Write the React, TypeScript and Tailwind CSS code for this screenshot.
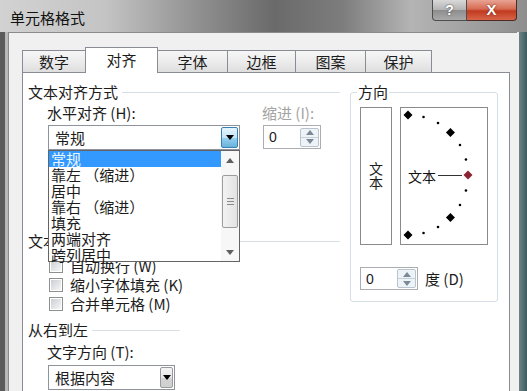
const tabs = [
  { label: "数字", w: "w-[63px]" },
  { label: "对齐", w: "w-[73px]" },
  { label: "字体", w: "w-[69px]" },
  { label: "边框", w: "w-[68px]" },
  { label: "图案", w: "w-[70px]" },
  { label: "保护", w: "w-[67px]" },
];

const listItems = ["常规", "靠左 （缩进）", "居中", "靠右 （缩进）", "填充", "两端对齐", "跨列居中"];

function DownTri({ color = "#000" }: { color?: string }) {
  return (
    <svg width="8" height="5" viewBox="0 0 8 5">
      <path d="M0 0 H8 L4 5 Z" fill={color} />
    </svg>
  );
}

function UpTri({ color = "#000" }: { color?: string }) {
  return (
    <svg width="8" height="5" viewBox="0 0 8 5">
      <path d="M0 5 H8 L4 0 Z" fill={color} />
    </svg>
  );
}

function Select({ value, width, hot }: { value: string; width: string; hot?: boolean }) {
  return (
    <div className={`flex h-[25px] ${width} items-stretch border border-[#8f939b] bg-white`}>
      <span className="flex-1 pl-[6px] text-[15px] leading-[23px]">{value}</span>
      <div
        className={
          hot
            ? "m-[1px] flex w-[17px] items-center justify-center rounded-[2px] border border-[#3c7fb1] bg-[linear-gradient(180deg,#e5f4fc_0%,#c4e5f6_50%,#98d1ef_51%,#68b3db_100%)]"
            : "m-[1px] flex w-[13px] items-center justify-center rounded-[2px] border border-[#9a9a9a] bg-[linear-gradient(180deg,#f4f4f4_0%,#e6e6e6_50%,#d4d4d4_51%,#cfcfcf_100%)]"
        }
      >
        <DownTri />
      </div>
    </div>
  );
}

function Spin({ value, height }: { value: string; height: string }) {
  return (
    <div className={`flex ${height} w-[58px] items-center border border-[#abadb3] bg-white`}>
      <span className="flex-1 pl-[5px] font-['Liberation_Sans',sans-serif] text-[14px] leading-none">{value}</span>
      <div className="mr-[1px] flex h-[19px] w-[19px] flex-col rounded-[2px] border border-[#b9c4d0] bg-[#eef3f8]">
        <div className="flex flex-1 items-center justify-center border-b border-[#c6d0da]">
          <UpTri color="#7d8896" />
        </div>
        <div className="flex flex-1 items-center justify-center">
          <DownTri color="#7d8896" />
        </div>
      </div>
    </div>
  );
}

function Checkbox({ label }: { label: string }) {
  return (
    <div className="ml-[21px] flex h-[19px] items-center gap-[7px]">
      <div className="flex h-[14px] w-[14px] items-center justify-center border border-[#8e8f8f] bg-white">
        <div className="h-[10px] w-[10px] bg-[linear-gradient(135deg,#cbcfd5,#f6f6f6)]" />
      </div>
      <span className="text-[15px] leading-[19px]">{label}</span>
    </div>
  );
}

function GroupHeader({ label, width }: { label: string; width: string }) {
  return (
    <div className={`flex h-[18px] ${width} items-center`}>
      <span className="pr-[4px] text-[15px] leading-[18px]">{label}</span>
      <div className="h-px flex-1 bg-[#d5dfe5]" />
    </div>
  );
}

function Dial() {
  const cx = 7;
  const cy = 67;
  const r = 60;
  const pts = [];
  for (let i = 0; i <= 12; i++) {
    const a = ((90 - i * 15) * Math.PI) / 180;
    pts.push({ x: cx + r * Math.cos(a), y: cy - r * Math.sin(a), big: i % 3 === 0, red: i === 6 });
  }
  return (
    <svg width="86" height="136" viewBox="0 0 86 136">
      {pts.map((p, i) =>
        p.big ? (
          <path
            key={i}
            d={`M${p.x} ${p.y - 4.5} L${p.x + 4.5} ${p.y} L${p.x} ${p.y + 4.5} L${p.x - 4.5} ${p.y} Z`}
            fill={p.red ? "#8a2433" : "#000"}
          />
        ) : (
          <circle key={i} cx={p.x} cy={p.y} r="1.3" fill="#000" />
        )
      )}
      <text x="7" y="74" fontSize="14" fontFamily="'Noto Sans CJK SC', sans-serif" fill="#111">
        文本
      </text>
      <line x1="37" y1="67.5" x2="61" y2="67.5" stroke="#333" strokeWidth="1" />
    </svg>
  );
}

export default function App() {
  return (
    <div className="flex h-[391px] w-[527px] flex-col overflow-hidden font-['Noto_Sans_CJK_SC','Noto_Sans',sans-serif] text-[#1c1c1c]">
      {/* title bar */}
      <div className="flex h-[32px] shrink-0 items-start bg-[linear-gradient(90deg,#d2d2d2_0%,#c4c4c4_20%,#8f8f8f_38%,#6a6a6a_52%,#7d7d7d_65%,#b4b4b4_78%,#8e8e8e_100%)]">
        <span className="pl-[10px] pt-[8px] text-[15px] leading-[20px] text-[#111]">单元格格式</span>
        <div className="ml-auto mr-[10px] flex h-[21px]">
          <div className="flex w-[35px] items-center justify-center rounded-bl-[4px] border border-t-0 border-[#4d4d4d] bg-[linear-gradient(180deg,#d9d9d9_0%,#b3b3b3_50%,#8d8d8d_51%,#a9a9a9_100%)] font-['Liberation_Sans',sans-serif] text-[14px] font-bold text-white [text-shadow:0_0_2px_#333]">
            ?
          </div>
          <div className="flex w-[50px] items-center justify-center rounded-br-[4px] border border-l-0 border-t-0 border-[#4d2a24] bg-[linear-gradient(180deg,#e8a494_0%,#d66a52_45%,#c13a20_55%,#d86548_100%)] font-['Liberation_Sans',sans-serif] text-[15px] font-bold text-white [text-shadow:0_0_2px_#5a1a10]">
            X
          </div>
        </div>
      </div>

      <div className="flex flex-1">
        {/* left frame */}
        <div className="w-[5px] bg-[#5b5b5b]" />
        <div className="w-[3px] bg-[#b9b9b9]" />

        {/* client area */}
        <div className="flex flex-1 flex-col border-l border-t border-[#8a8a8a] bg-[#f0f0f0] pl-[13px] pr-[7px] pt-[14px]">
          {/* tabs */}
          <div className="flex h-[25px] items-end">
            {tabs.map((t, i) => {
              const active = i === 1;
              const afterActive = i === 2;
              return (
                <div
                  key={t.label}
                  className={
                    active
                      ? `relative z-10 -mb-px flex h-[26px] ${t.w} items-start justify-center border-x border-t border-[#898c95] bg-white pt-[2px] text-[15px] leading-[20px]`
                      : `flex h-[22px] ${t.w} items-center justify-center border-t border-[#898c95] ${afterActive ? "" : "border-l"} ${i === tabs.length - 1 ? "border-r" : ""} bg-[linear-gradient(180deg,#f6f6f6_0%,#ececec_50%,#dedede_100%)] text-[15px] leading-[20px]`
                  }
                >
                  {t.label}
                </div>
              );
            })}
          </div>

          {/* tab panel */}
          <div className="relative flex flex-1 border border-b-0 border-[#898c95] bg-white">
            {/* left column */}
            <div className="flex w-[317px] flex-col pl-[5px]">
              <div className="mt-[10px]">
                <GroupHeader label="文本对齐方式" width="w-[312px]" />
              </div>
              <div className="mt-[3px] flex">
                <div className="ml-[19px] flex flex-col gap-[3px]">
                  <span className="h-[18px] text-[15px] leading-[18px]">水平对齐 (H):</span>
                  <div className="ml-px">
                    <Select value="常规" width="w-[192px]" hot />
                  </div>
                </div>
                <div className="ml-[22px] flex flex-col gap-[3px]">
                  <span className="h-[18px] text-[15px] leading-[18px] text-[#a3a3a3]">缩进 (I):</span>
                  <div className="ml-px">
                    <Spin value="0" height="h-[24px]" />
                  </div>
                </div>
              </div>

              <div className="mt-[82px]">
                <GroupHeader label="文本控制" width="w-[312px]" />
              </div>
              <div className="mt-[6px] flex flex-col">
                <Checkbox label="自动换行 (W)" />
                <Checkbox label="缩小字体填充 (K)" />
                <Checkbox label="合并单元格 (M)" />
              </div>

              <div className="mt-[8px]">
                <GroupHeader label="从右到左" width="w-[152px]" />
              </div>
              <span className="ml-[19px] mt-[4px] h-[18px] text-[15px] leading-[18px]">文字方向 (T):</span>
              <div className="ml-[20px] mt-[4px]">
                <Select value="根据内容" width="w-[127px]" />
              </div>
            </div>

            {/* orientation group */}
            <div className="ml-[10px] mt-[19px] h-[210px] w-[148px] rounded-[3px] border border-[#d5dfe5]">
              <div className="-mt-[10px] ml-[6px] w-fit bg-white px-px text-[15px] leading-[18px]">方向</div>
              <div className="ml-[9px] mt-[6px] flex gap-[8px]">
                <div className="flex h-[138px] w-[32px] items-center justify-center border border-[#8a8a8a]">
                  <span className="text-[14px] leading-[16px] [writing-mode:vertical-rl]">文本</span>
                </div>
                <div className="h-[138px] w-[88px] border border-[#8a8a8a]">
                  <Dial />
                </div>
              </div>
              <div className="ml-[9px] mt-[22px] flex items-center gap-[7px]">
                <Spin value="0" height="h-[23px]" />
                <span className="text-[15px] leading-[18px]">度 (D)</span>
              </div>
            </div>

            {/* open dropdown list */}
            <div className="absolute left-[25px] top-[77px] z-20 flex h-[112px] w-[192px] border border-[#646464] bg-white">
              <div className="flex flex-1 flex-col">
                {listItems.map((item, i) => (
                  <div
                    key={item}
                    className={`h-[16px] whitespace-nowrap pl-[2px] text-[15px] leading-[16px] ${i === 0 ? "bg-[#3399ff] text-[#eaf6ff]" : ""}`}
                  >
                    {item}
                  </div>
                ))}
              </div>
              <div className="flex w-[18px] flex-col items-center bg-[#f7f7f7] py-[1px]">
                <div className="flex h-[16px] w-full items-center justify-center">
                  <UpTri color="#5f5f5f" />
                </div>
                <div className="mt-[7px] flex h-[53px] w-[16px] flex-col items-center justify-center gap-[2px] rounded-[2px] border border-[#9c9c9c] bg-[linear-gradient(90deg,#f3f3f3,#e2e2e2)]">
                  <div className="h-px w-[7px] bg-[#8a8a8a]" />
                  <div className="h-px w-[7px] bg-[#8a8a8a]" />
                  <div className="h-px w-[7px] bg-[#8a8a8a]" />
                </div>
                <div className="mt-auto flex h-[16px] w-full items-center justify-center">
                  <DownTri color="#5f5f5f" />
                </div>
              </div>
            </div>
          </div>
        </div>

        {/* right frame */}
        <div className="w-[2px] bg-[#f4eeee]" />
        <div className="w-[8px] bg-[linear-gradient(90deg,#6d8486,#3c5a5e)]" />
      </div>
    </div>
  );
}
